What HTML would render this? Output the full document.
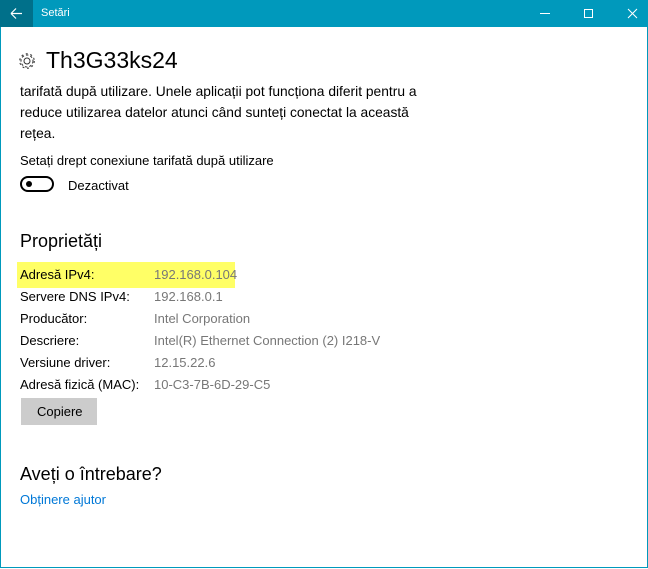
<html><head><style>
body{margin:0;width:648px;height:569px;overflow:hidden;font-family:"Liberation Sans",sans-serif;background:#fff;position:relative}
.win{position:absolute;left:0;top:0;width:646px;height:567px;border:1px solid #0099bc;border-top:none}
.tb{position:absolute;left:0;top:0;width:648px;height:27px;background:#0099bc;color:#fff}
.back{position:absolute;left:0;top:0;width:33px;height:27px;background:#00708a}
.t{position:absolute;font-size:14px;color:#000;white-space:nowrap}
.p{font-size:13px}
.g{color:#777}
</style></head><body>
<div class="win"></div>
<div class="tb">
<div class="back"><svg width="33" height="27"><path d="M11 13.5h11M11 13.5l5-5M11 13.5l5 5" stroke="#fff" stroke-width="1.2" fill="none"/></svg></div>
<div style="position:absolute;left:41px;top:7px;font-size:11px">Setări</div>
<svg style="position:absolute;left:530px;top:0" width="118" height="27"><path d="M10 13.5h10" stroke="#fff"/><rect x="54.5" y="9.5" width="8" height="8" stroke="#fff" fill="none"/><path d="M98 9l9 9M107 9l-9 9" stroke="#fff"/></svg>
</div>
<svg style="position:absolute;left:18px;top:52px" width="18" height="18" viewBox="0 0 18 18"><circle cx="9" cy="9" r="3" stroke="#333" fill="none"/><circle cx="9" cy="9" r="6" stroke="#333" fill="none" stroke-dasharray="2.5 2"/><circle cx="9" cy="9" r="7.3" stroke="#333" fill="none" stroke-dasharray="2 2.7"/></svg>
<div class="t" style="left:46px;top:47px;font-size:23px">Th3G33ks24</div>
<div class="t" style="left:20px;top:81px;line-height:21px;font-size:13.8px">tarifată după utilizare. Unele aplicații pot funcționa diferit pentru a<br>reduce utilizarea datelor atunci când sunteți conectat la această<br>rețea.</div>
<div class="t p" style="left:20px;top:153px">Setați drept conexiune tarifată după utilizare</div>
<div style="position:absolute;left:20px;top:176px;width:34px;height:16px;border:2px solid #000;border-radius:10px;box-sizing:border-box"><div style="position:absolute;left:4px;top:3px;width:6px;height:6px;border-radius:50%;background:#000"></div></div>
<div class="t p" style="left:68px;top:178px">Dezactivat</div>
<div class="t" style="left:20px;top:231px;font-size:18px">Proprietăți</div>
<div style="position:absolute;left:17px;top:262px;width:218px;height:26px;background:#ffff66"></div>
<div class="t p" style="left:20px;top:267px">Adresă IPv4:</div><div class="t p g" style="left:154px;top:267px">192.168.0.104</div>
<div class="t p" style="left:20px;top:289px">Servere DNS IPv4:</div><div class="t p g" style="left:154px;top:289px">192.168.0.1</div>
<div class="t p" style="left:20px;top:311px">Producător:</div><div class="t p g" style="left:154px;top:311px">Intel Corporation</div>
<div class="t p" style="left:20px;top:333px">Descriere:</div><div class="t p g" style="left:154px;top:333px">Intel(R) Ethernet Connection (2) I218-V</div>
<div class="t p" style="left:20px;top:355px">Versiune driver:</div><div class="t p g" style="left:154px;top:355px">12.15.22.6</div>
<div class="t p" style="left:20px;top:377px">Adresă fizică (MAC):</div><div class="t p g" style="left:154px;top:377px">10-C3-7B-6D-29-C5</div>
<div style="position:absolute;left:21px;top:398px;width:76px;height:27px;background:#ccc"></div>
<div class="t p" style="left:37px;top:404px">Copiere</div>
<div class="t" style="left:20px;top:464px;font-size:18px">Aveți o întrebare?</div>
<div class="t p" style="left:20px;top:492px;color:#0078d7">Obținere ajutor</div>
</body></html>
